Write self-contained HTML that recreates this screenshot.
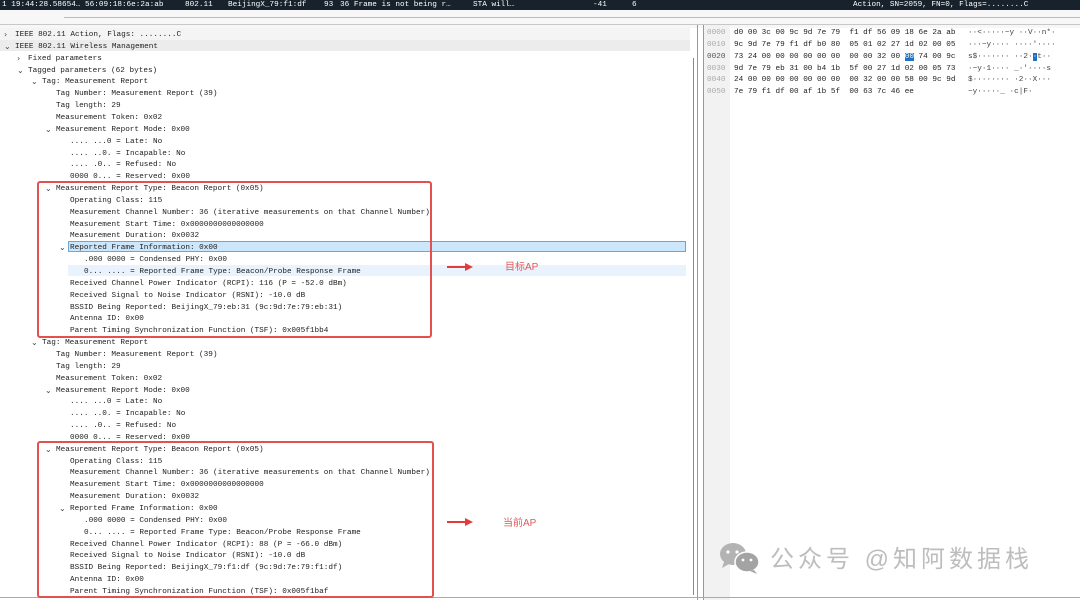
<!DOCTYPE html>
<html><head><meta charset="utf-8"><style>
*{margin:0;padding:0;box-sizing:border-box}
body{width:1080px;height:600px;overflow:hidden;background:#fff;position:relative;font-family:"Liberation Mono",monospace;font-size:7.7px;color:#222}
.a{position:absolute;white-space:pre}
.top{position:absolute;left:0;top:0;width:1080px;height:10px;background:#17222c;color:#fff}
.top span{position:absolute;top:0;line-height:10px;white-space:pre}
.r{position:absolute;height:11.85px;line-height:11.85px;white-space:pre}
.chev{position:absolute;font-size:8px;color:#444;font-family:"DejaVu Sans",sans-serif}
.red{position:absolute;border:2px solid #e2504f;border-radius:3px}
.lbl{position:absolute;color:#e05a5a;font-family:"Liberation Sans","Noto Sans CJK SC",sans-serif;font-size:10px}
.arrow{position:absolute;height:2px;background:#e03c3c}
.hex{position:absolute;white-space:pre;line-height:11.85px}
</style></head><body>
<div class="top">
<span style="left:2px">1 19:44:28.58654… 56:09:18:6e:2a:ab</span>
<span style="left:185px">802.11</span>
<span style="left:228px">BeijingX_79:f1:df</span>
<span style="left:324px">93</span>
<span style="left:340px">36 Frame is not being r…</span>
<span style="left:473px">STA will…</span>
<span style="left:593px">-41</span>
<span style="left:632px">6</span>
<span style="left:853px">Action, SN=2059, FN=0, Flags=........C</span>
</div>
<div style="position:absolute;left:0;top:10px;width:1080px;height:18px;background:#f7f7f7"></div>
<div style="position:absolute;left:64px;top:17px;width:1016px;height:1px;background:#bbb"></div>
<div style="position:absolute;left:0;top:24px;width:1080px;height:1px;background:#c8c8c8"></div>
<div style="position:absolute;left:697px;top:25px;width:1px;height:575px;background:#999"></div>
<div style="position:absolute;left:693px;top:58px;width:1px;height:537px;background:#888"></div>
<div style="position:absolute;left:0;top:28px;width:690px;height:12px;background:#f4f4f4"></div>
<div style="position:absolute;left:0;top:40px;width:690px;height:11px;background:#ececec"></div>
<div style="position:absolute;left:703px;top:25px;width:1px;height:575px;background:#999"></div>
<div style="position:absolute;left:704px;top:25px;width:26px;height:575px;background:#f2f2f2"></div>
<div style="position:absolute;left:0;top:597px;width:1080px;height:1px;background:#aaa"></div>
<div style="position:absolute;left:68px;top:241px;width:618px;height:11px;background:#cce6fb;border:1px solid #6aa6d6"></div>
<div style="position:absolute;left:68px;top:265px;width:618px;height:11px;background:#e8f3fd"></div>
<div id="tree"></div>
<div class="red" style="left:37px;top:181px;width:395px;height:157px"></div>
<div class="red" style="left:37px;top:441px;width:397px;height:157px"></div>
<div class="arrow" style="left:447px;top:266px;width:20px"></div>
<div style="position:absolute;left:465px;top:263px;border-left:8px solid #e03c3c;border-top:4px solid transparent;border-bottom:4px solid transparent"></div>
<div class="lbl" style="left:505px;top:258px">目标AP</div>
<div class="arrow" style="left:447px;top:521px;width:20px"></div>
<div style="position:absolute;left:465px;top:518px;border-left:8px solid #e03c3c;border-top:4px solid transparent;border-bottom:4px solid transparent"></div>
<div class="lbl" style="left:503px;top:514px">当前AP</div>
<div class="hex" style="left:707px;top:28px;color:#aaa">0000
0010
<span style="color:#555">0020</span>
0030
0040
0050</div>
<div class="hex" style="left:734px;top:28px">d0 00 3c 00 9c 9d 7e 79  f1 df 56 09 18 6e 2a ab
9c 9d 7e 79 f1 df b0 80  05 01 02 27 1d 02 00 05
73 24 00 00 00 00 00 00  00 00 32 00 <span style="background:#1f6fc2;color:#fff">00</span> 74 00 9c
9d 7e 79 eb 31 00 b4 1b  5f 00 27 1d 02 00 05 73
24 00 00 00 00 00 00 00  00 32 00 00 58 00 9c 9d
7e 79 f1 df 00 af 1b 5f  00 63 7c 46 ee</div>
<div class="hex" style="left:968px;top:28px;color:#444">··<·····~y ··V··n*·
···~y···· ····'····
s$······· ··2·<span style="background:#1f6fc2;color:#fff">·</span>t··
·~y·1···· _·'····s
$········ ·2··X···
~y·····_ ·c|F·</div>
<svg style="position:absolute;left:718px;top:541px" width="44" height="34" viewBox="0 0 44 34">
<ellipse cx="15" cy="13" rx="13" ry="11" fill="#b3b3b3"/>
<path d="M6 21 L4 27 L11 23Z" fill="#b3b3b3"/>
<ellipse cx="29" cy="21" rx="12" ry="10" fill="#a3a3a3" stroke="#fff" stroke-width="1.5"/>
<path d="M36 29 L39 33 L32 30Z" fill="#a3a3a3"/>
<circle cx="10" cy="11" r="1.6" fill="#fff"/><circle cx="19" cy="11" r="1.6" fill="#fff"/>
<circle cx="25" cy="19" r="1.4" fill="#fff"/><circle cx="33" cy="19" r="1.4" fill="#fff"/>
</svg>
<div class="a" style="left:770px;top:539px;font-family:'Liberation Sans','Noto Sans CJK SC',sans-serif;font-size:24px;color:#bdbdbd;letter-spacing:4px">公众号 @知阿数据栈</div>
<script>
var rows=[
[0,">","IEEE 802.11 Action, Flags: ........C"],
[0,"v","IEEE 802.11 Wireless Management"],
[1,">","Fixed parameters"],
[1,"v","Tagged parameters (62 bytes)"]];
function tag(){
return [[2,"v","Tag: Measurement Report"],
[3,"","Tag Number: Measurement Report (39)"],
[3,"","Tag length: 29"],
[3,"","Measurement Token: 0x02"],
[3,"v","Measurement Report Mode: 0x00"],
[4,"",".... ...0 = Late: No"],
[4,"",".... ..0. = Incapable: No"],
[4,"",".... .0.. = Refused: No"],
[4,"","0000 0... = Reserved: 0x00"],
[3,"v","Measurement Report Type: Beacon Report (0x05)"],
[4,"","Operating Class: 115"],
[4,"","Measurement Channel Number: 36 (iterative measurements on that Channel Number)"],
[4,"","Measurement Start Time: 0x0000000000000000"],
[4,"","Measurement Duration: 0x0032"],
[4,"v","Reported Frame Information: 0x00"],
[5,"",".000 0000 = Condensed PHY: 0x00"],
[5,"","0... .... = Reported Frame Type: Beacon/Probe Response Frame"]];}
var t1=tag();t1.push([4,"","Received Channel Power Indicator (RCPI): 116 (P = -52.0 dBm)"],[4,"","Received Signal to Noise Indicator (RSNI): -10.0 dB"],[4,"","BSSID Being Reported: BeijingX_79:eb:31 (9c:9d:7e:79:eb:31)"],[4,"","Antenna ID: 0x00"],[4,"","Parent Timing Synchronization Function (TSF): 0x005f1bb4"]);
var t2=tag();t2.push([4,"","Received Channel Power Indicator (RCPI): 88 (P = -66.0 dBm)"],[4,"","Received Signal to Noise Indicator (RSNI): -10.0 dB"],[4,"","BSSID Being Reported: BeijingX_79:f1:df (9c:9d:7e:79:f1:df)"],[4,"","Antenna ID: 0x00"],[4,"","Parent Timing Synchronization Function (TSF): 0x005f1baf"]);
rows=rows.concat(t1,t2);
var tx=[15,28,42,56,70,84],h="";
rows.forEach(function(r,i){var y=30+i*11.85;var x=tx[r[0]];
if(r[1])h+='<div class="r chev" style="left:'+(x-11)+'px;top:'+(y-1)+'px">'+(r[1]=="v"?"&#8964;":"&#8250;")+'</div>';
h+='<div class="r" style="left:'+x+'px;top:'+y+'px">'+r[2]+'</div>';});
document.getElementById("tree").innerHTML=h;
</script>
</body></html>
